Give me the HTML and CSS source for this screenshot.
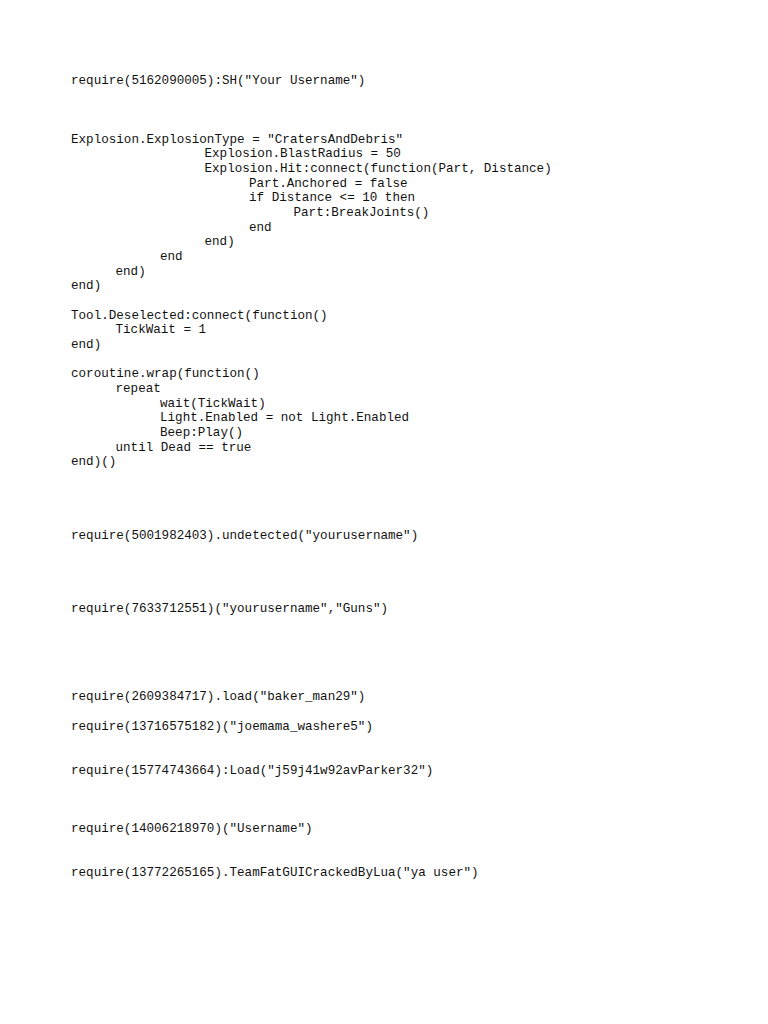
FILE: index.html
```html
<!DOCTYPE html>
<html lang="en">
<head>
<meta charset="utf-8">
<title>Script</title>
<link rel="stylesheet" href="styles.css">
</head>
<body>
<main class="page">
<pre class="code">require(5162090005):SH("Your Username")



Explosion.ExplosionType = "CratersAndDebris"
			Explosion.BlastRadius = 50
			Explosion.Hit:connect(function(Part, Distance)
				Part.Anchored = false
				if Distance &lt;= 10 then
					Part:BreakJoints()
				end
			end)
		end
	end)
end)

Tool.Deselected:connect(function()
	TickWait = 1
end)

coroutine.wrap(function()
	repeat
		wait(TickWait)
		Light.Enabled = not Light.Enabled
		Beep:Play()
	until Dead == true
end)()




require(5001982403).undetected("yourusername")




require(7633712551)("yourusername","Guns")





require(2609384717).load("baker_man29")

require(13716575182)("joemama_washere5")


require(15774743664):Load("j59j41w92avParker32")



require(14006218970)("Username")


require(13772265165).TeamFatGUICrackedByLua("ya user")</pre>
</main>
</body>
</html>
```
FILE: styles.css
```css
html, body {
  margin: 0;
  padding: 0;
  background: #ffffff;
}

.page {
  width: 768px;
  height: 1024px;
  box-sizing: border-box;
  padding: 74px 0 0 71px;
}

.code {
  margin: 0;
  font-family: "Liberation Mono", "DejaVu Sans Mono", monospace;
  font-size: 12.58px;
  line-height: 14.67px;
  color: #111111;
  tab-size: 44.5px;
  -moz-tab-size: 44.5px;
  white-space: pre;
}
```
